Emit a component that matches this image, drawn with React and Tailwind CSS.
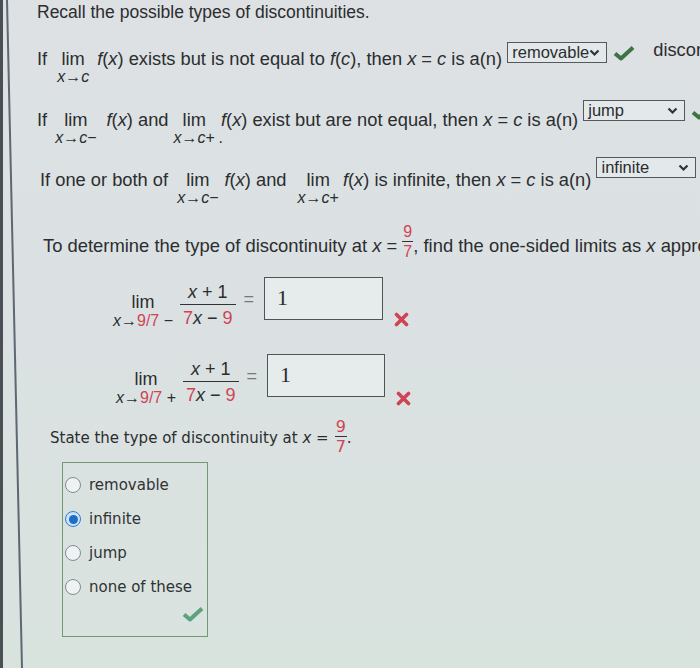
import React from 'react';

const ink = 'text-[#2b2d2f]';
const red = 'text-[#cf4455]';

function Lim({ sub, dot, className = '' }) {
  return (
    <div className={`self-start flex flex-col items-center shrink-0 ${className}`}>
      <span className="leading-[20px]">lim</span>
      <span className="relative text-[16px] leading-[16px]">
        {sub}
        {dot && <span className="absolute -right-[8px] top-0">.</span>}
      </span>
    </div>
  );
}

function Chevron() {
  return (
    <svg width="11" height="8" viewBox="0 0 11 8" className="shrink-0">
      <path d="M1.5 1.5 L5.5 5.5 L9.5 1.5" fill="none" stroke="#333" strokeWidth="2.2" />
    </svg>
  );
}

function Select({ value, className }) {
  return (
    <div
      className={`shrink-0 flex items-center justify-between h-[21px] border border-[#56595c] bg-[#e3e8ea] pl-[4px] pr-[6px] text-[16.5px] leading-[19px] ${className}`}
    >
      <span>{value}</span>
      <Chevron />
    </div>
  );
}

function Check({ className = '', color = '#3f7444' }) {
  return (
    <svg width="22" height="16" viewBox="0 0 22 16" className={`shrink-0 ${className}`}>
      <path d="M2 8.5 L8 13.5 L20 2.5" fill="none" stroke={color} strokeWidth="4" strokeLinejoin="round" />
    </svg>
  );
}

function Cross({ className = '' }) {
  return (
    <svg width="15" height="15" viewBox="0 0 15 15" className={`shrink-0 ${className}`}>
      <path d="M2.5 2.5 L12.5 12.5 M12.5 2.5 L2.5 12.5" stroke="#cf4455" strokeWidth="3.6" strokeLinecap="round" />
    </svg>
  );
}

function Frac({ top, bottom, className = '' }) {
  return (
    <div className={`shrink-0 flex flex-col items-center text-[16px] leading-[15px] ${red} ${className}`}>
      <span className="px-[1px] pb-[2px]">{top}</span>
      <span className="px-[1px] pt-[2px] border-t border-[#333]">{bottom}</span>
    </div>
  );
}

function LimitRow({ sign, className, boxClass, crossClass }) {
  return (
    <div className={`flex items-start text-[18px] ${className}`}>
      <div className="flex flex-col items-center mt-[15px]">
        <span className="leading-[20px]">lim</span>
        <span className="text-[16px] leading-[18px] whitespace-pre">
          <i>x</i>→<span className={red}>9/7</span> {sign}
        </span>
      </div>
      <div className="flex flex-col items-center mt-[5px] ml-[7px]">
        <span className="leading-[20px] px-[4px] pb-[2px]">
          <i>x</i> + 1
        </span>
        <span className="leading-[20px] border-t border-[#333] px-[3px] pt-[3px]">
          <span className={red}>7</span>
          <i>x</i> − <span className={red}>9</span>
        </span>
      </div>
      <span className="mt-[12px] ml-[8px] leading-[20px] text-[#777]">=</span>
      <div
        className={`h-[43px] border border-[#4f5456] bg-[#e6ebeb] ml-[10px] pl-[12px] pt-[8px] text-[22px] leading-[24px] ${boxClass}`}
        style={{ fontFamily: '"Liberation Serif", serif' }}
      >
        1
      </div>
      <Cross className={crossClass} />
    </div>
  );
}

function Radio({ checked, label }) {
  return (
    <div className="flex items-center h-[34px]">
      <span
        className={`w-[16px] h-[16px] rounded-full border-[1.5px] ${checked ? 'border-[#2a7fd0] bg-[#cfe3f5]' : 'border-[#7d8d98] bg-[#eef2f2]'} flex items-center justify-center shrink-0`}
      >
        {checked && <span className="w-[9px] h-[9px] rounded-full bg-[#1b6fc7]" />}
      </span>
      <span className="ml-[8px]">{label}</span>
    </div>
  );
}

export default function App() {
  return (
    <div
      className={`relative w-[700px] h-[668px] overflow-hidden bg-linear-to-b from-[#dde1e4] via-[#dbe1e2] to-[#d9e3de] ${ink}`}
      style={{ fontFamily: '"Liberation Sans", Arial, sans-serif' }}
    >
      <svg className="absolute inset-0 pointer-events-none" width="700" height="668">
        <rect x="0" y="0" width="3" height="668" fill="#4a4f53" />
        <line x1="7" y1="0" x2="22" y2="668" stroke="#5d6872" strokeWidth="2" />
      </svg>

      <div className="flex flex-col text-[18.3px] whitespace-pre">
        <div className="pl-[37px] pt-[2px] h-[22px] leading-[20px] text-[17.5px]">Recall the possible types of discontinuities.</div>

        <div className="flex items-center h-[20px] leading-[20px] pl-[37px] mt-[27px]">
          <span>If</span>
          <Lim sub={<><i>x</i>→<i>c</i></>} className="ml-[10px] mr-[8px]" />
          <span>
            <i>f</i>(<i>x</i>) exists but is not equal to <i>f</i>(<i>c</i>), then <i>x</i> = <i>c</i> is a(n){' '}
          </span>
          <Select value="removable" className="w-[100px] mb-[13px]" />
          <Check className="ml-[6px] mb-[12px]" />
          <span className="ml-[18px] mb-[18px]">discon</span>
        </div>

        <div className="flex items-center h-[20px] leading-[20px] pl-[37px] mt-[41px]">
          <span>If</span>
          <Lim sub={<><i>x</i>→<i>c</i>−</>} className="ml-[8px] mr-[10px]" />
          <span>
            <i>f</i>(<i>x</i>) and{' '}
          </span>
          <Lim sub={<><i>x</i>→<i>c</i>+</>} dot className="mr-[6px]" />
          <span>
            <i>f</i>(<i>x</i>) exist but are not equal, then <i>x</i> = <i>c</i> is a(n){' '}
          </span>
          <Select value="jump" className="w-[102px] mb-[19px]" />
          <Check className="ml-[6px] mb-[16px]" />
        </div>

        <div className="flex items-center h-[20px] leading-[20px] pl-[40px] mt-[40px] text-[18.3px]">
          <span>If one or both of </span>
          <Lim sub={<><i>x</i>→<i>c</i>−</>} className="ml-[4px] mr-[6px]" />
          <span>
            <i>f</i>(<i>x</i>) and{' '}
          </span>
          <Lim sub={<><i>x</i>→<i>c</i>+</>} className="ml-[6px] mr-[4px]" />
          <span>
            <i>f</i>(<i>x</i>) is infinite, then <i>x</i> = <i>c</i> is a(n){' '}
          </span>
          <Select value="infinite" className="w-[100px] mb-[25px]" />
        </div>

        <div className="flex items-center h-[20px] leading-[20px] pl-[43px] mt-[46px] text-[18.4px]">
          <span>
            To determine the type of discontinuity at <i>x</i> ={' '}
          </span>
          <Frac top="9" bottom="7" className="mb-[10px]" />
          <span>
            , find the one-sided limits as <i>x</i> approaches
          </span>
        </div>

        <LimitRow sign="−" className="pl-[113px] mt-[21px]" boxClass="w-[119px]" crossClass="ml-[11px] mt-[35px]" />
        <LimitRow sign="+" className="pl-[116px] mt-[24px]" boxClass="w-[118px]" crossClass="ml-[11px] mt-[37px]" />

        <div
          className="flex items-center h-[20px] leading-[20px] pl-[50px] mt-[21px] text-[15px]"
          style={{ fontFamily: '"DejaVu Sans", Verdana, sans-serif' }}
        >
          <span>
            State the type of discontinuity at <i>x</i> =
          </span>
          <Frac top="9" bottom="7" className="ml-[6px] mb-[3px]" />
          <span>.</span>
        </div>

        <div
          className="ml-[62px] mt-[14px] w-[146px] h-[175px] border border-[#6f9a72] pl-[2px] pt-[5px] flex flex-col text-[15px] text-[#303234]"
          style={{ fontFamily: '"DejaVu Sans", Verdana, sans-serif' }}
        >
          <Radio label="removable" />
          <Radio label="infinite" checked />
          <Radio label="jump" />
          <Radio label="none of these" />
          <div className="flex justify-end pr-[3px] mt-[2px]">
            <Check color="#5ea27c" />
          </div>
        </div>
      </div>
    </div>
  );
}
